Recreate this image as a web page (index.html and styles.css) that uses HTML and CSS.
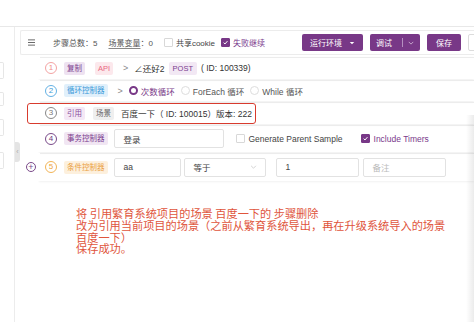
FILE: index.html
```html
<!DOCTYPE html>
<html lang="zh">
<head>
<meta charset="utf-8">
<link rel="stylesheet" href="styles.css">
</head>
<body>
<div class="topline"></div>
<div class="main">
  <aside class="sidebar">
    <div class="ghost g1"></div>
    <div class="ghost g2"></div>
    <div class="ghost g3"></div>
    <div class="ghost g4"></div>
  </aside>
  <div class="handle">‹</div>
  <section class="content">
    <div class="toolbar">
      <svg class="burger" viewBox="0 0 8 7"><path d="M0 .5h8M0 3.5h8M0 6.5h8" stroke="#555" stroke-width="1"/></svg>
      <span class="stat">步骤总数：5</span>
      <span class="stat"><u>场景变量</u>：0</span>
      <span class="check"><span class="box"></span>共享cookie</span>
      <span class="check on"><span class="box"><svg viewBox="0 0 10 10"><path d="M2.3 5.2 4.3 7.1 7.8 3" fill="none" stroke="#fff" stroke-width="1.4"/></svg></span>失败继续</span>
      <span class="btns">
        <span class="btn env">运行环境<svg class="caret" viewBox="0 0 8 5"><path d="M1 1h6L4 4z" fill="#fff"/></svg></span>
        <span class="btn debug">调试<span class="sep"></span><svg class="chev" viewBox="0 0 8 5"><path d="M1 1 4 4 7 1" fill="none" stroke="#e8d6ec" stroke-width="0.9"/></svg></span>
        <span class="btn save">保存</span>
        <span class="btn ghostbtn"></span>
      </span>
    </div>

    <div class="steps">
      <div class="row r1">
        <span class="gutter"></span>
        <span class="num n1">1</span>
        <span class="tag t-copy">复制</span>
        <span class="tag t-api">API</span>
        <span class="arrow">&gt;</span>
        <span class="txt">∠还好2</span>
        <span class="tag t-post">POST</span>
        <span class="txt">( ID: 100339)</span>
      </div>
      <div class="row r2">
        <span class="gutter"></span>
        <span class="num n2">2</span>
        <span class="tag t-loop">循环控制器</span>
        <span class="arrow">&gt;</span>
        <span class="radio on"></span><span class="rlabel on">次数循环</span>
        <span class="radio"></span><span class="rlabel">ForEach 循环</span>
        <span class="radio"></span><span class="rlabel">While 循环</span>
      </div>
      <div class="row r3">
        <span class="gutter"></span>
        <span class="num n3">3</span>
        <span class="tag t-ref">引用</span>
        <span class="tag t-scene">场景</span>
        <span class="txt">百度一下（ ID: 100015）版本: 222</span>
        <span class="mark"></span>
      </div>
      <div class="row r4">
        <span class="gutter"></span>
        <span class="num n4">4</span>
        <span class="tag t-tx">事务控制器</span>
        <span class="input w-login">登录</span>
        <span class="check"><span class="box"></span>Generate Parent Sample</span>
        <span class="check on timers"><span class="box"><svg viewBox="0 0 10 10"><path d="M2.3 5.2 4.3 7.1 7.8 3" fill="none" stroke="#fff" stroke-width="1.4"/></svg></span>Include Timers</span>
      </div>
      <div class="row r5">
        <span class="gutter"><span class="plus">+</span></span>
        <span class="num n5">5</span>
        <span class="tag t-if">条件控制器</span>
        <span class="input w-aa">aa</span>
        <span class="input w-sel">等于<svg class="selchev" viewBox="0 0 8 5"><path d="M1 1 4 4 7 1" fill="none" stroke="#bbb" stroke-width="0.8"/></svg></span>
        <span class="input w-one">1</span>
        <span class="input w-note ph">备注</span>
      </div>
    </div>

    <div class="note">
      <p>将 引用繁育系统项目的场景 百度一下的 步骤删除</p>
      <p>改为引用当前项目的场景（之前从繁育系统导出，再在升级系统导入的场景<br>百度一下）</p>
      <p>保存成功。</p>
    </div>
  </section>
  <div class="drawer-shadow"></div>
</div>
</body>
</html>
```

FILE: styles.css
```css
* { box-sizing: border-box; }
html, body { margin: 0; padding: 0; }
body {
  width: 474px;
  height: 322px;
  overflow: hidden;
  background: #fff;
  font-family: "Liberation Sans", "Noto Sans CJK SC", sans-serif;
  font-size: 8.5px;
  color: #333;
}
.topline { height: 27px; border-bottom: 1px solid #e8e8e8; }
.main { position: relative; display: flex; height: 295px; }
.sidebar {
  width: 15px;
  border-right: 1px solid #ececec;
  display: flex;
  flex-direction: column;
  flex: none;
}
.ghost {
  width: 4px;
  height: 17px;
  border: 1px solid #e6e6e6;
  border-left: none;
  border-radius: 0 2px 2px 0;
}
.g1 { margin-top: 35px; }
.g2 { margin-top: 13px; height: 14px; }
.g3 { margin-top: 13px; }
.g4 { margin-top: 16px; }
.handle {
  position: absolute;
  left: 15px;
  top: 115px;
  width: 5px;
  height: 20px;
  background: #e4e4e4;
  border-radius: 0 3px 3px 0;
  color: #aaa;
  font-size: 7px;
  line-height: 20px;
  text-align: center;
}
.content { flex: 1; padding-left: 5px; min-width: 0; }

.toolbar {
  margin-top: 3px;
  height: 25px;
  border: 1px solid #ececec;
  border-right: none;
  border-radius: 2px 0 0 2px;
  display: flex;
  align-items: center;
  padding-left: 7px;
  white-space: nowrap;
  color: #555;
  font-size: 8px;
}
.burger { width: 7px; height: 7px; margin-right: 18px; flex: none; }
.stat { margin-right: 11px; }
.stat u { text-decoration-color: #888; text-underline-offset: 2px; }
.check { display: inline-flex; align-items: center; margin-right: 6px; color: #444; }
.check .box {
  width: 9px; height: 9px;
  border: 1px solid #d8d8d8;
  border-radius: 1px;
  margin-right: 3px;
  display: inline-flex;
  background: #fff;
  flex: none;
}
.check.on { color: #7a3a8c; }
.check.on .box { background: #783887; border-color: #783887; }
.check .box svg { width: 100%; height: 100%; }
.btns { display: flex; align-items: center; margin-left: auto; gap: 7px; margin-right: -14px; }
.btn {
  height: 17px;
  background: #783887;
  color: #fff;
  border-radius: 2px;
  display: inline-flex;
  align-items: center;
  justify-content: center;
  font-size: 8px;
  flex: none;
}
.env { width: 61px; }
.caret { width: 6px; height: 4px; margin-left: 7px; }
.debug { width: 50px; }
.sep { width: 1px; height: 9px; background: #b58fc0; margin: 0 5px 0 10px; }
.chev { width: 6px; height: 4px; }
.save { width: 34px; }
.ghostbtn { width: 20px; background: #fff; border: 1px solid #dcdcdc; }

.steps {
  margin-top: 2px;
  display: flex;
  flex-direction: column;
  gap: 1px;
}
.row {
  position: relative;
  display: flex;
  align-items: center;
  white-space: nowrap;
  color: #444;
}
.row > .gutter {
  width: 20px;
  flex: none;
  align-self: stretch;
  display: flex;
  align-items: center;
  background: #fff;
}
.row::before {
  content: "";
  position: absolute;
  left: 19px; right: 0; top: 0; bottom: 0;
  border-top: 1px solid #ececec;
  box-shadow: 0 1px 2px rgba(0,0,0,0.06);
  z-index: -1;
}
.r1 { height: 22px; }
.r2 { height: 21px; }
.r3 { height: 22px; }
.r4 { height: 27px; }
.r5 { height: 28px; }
.num {
  width: 12px; height: 12px;
  border-radius: 50%;
  border: 1px solid;
  font-size: 8px;
  line-height: 10px;
  text-align: center;
  margin-left: 5px;
  margin-right: 7px;
  flex: none;
}
.n1 { color: #f08c8c; border-color: #f3a3a3; }
.n2 { color: #3c9ad8; border-color: #64b1e4; }
.n3 { color: #777; border-color: #888; }
.n4 { color: #6b3a7c; border-color: #7a4a8a; }
.n5 { color: #eea43a; border-color: #f2b457; }
.tag {
  height: 13px;
  line-height: 13px;
  padding: 0 3px;
  font-size: 7.5px;
  border-radius: 2px;
  margin-right: 10px;
  flex: none;
}
.t-copy { background: #eee2f1; color: #7b3d8f; }
.t-api { background: #fce8ec; color: #e9677f; }
.t-post { background: #f2e8f4; color: #7b3d8f; margin-left: 4px; margin-right: 4px; padding: 0 4px; }
.t-loop { background: #e1f0fb; color: #3a99d9; }
.t-ref { background: #f4e8f6; color: #8b4c9c; margin-right: 8px; }
.t-scene { background: #efefef; color: #666; margin-right: 7px; }
.t-tx { background: #f1e6f3; color: #7b3d8f; margin-right: 6px; }
.t-if { background: #fdf0dd; color: #eaa043; margin-right: 6px; }
.arrow { color: #888; margin-right: 6px; font-size: 9px; }
.txt { color: #333; }
.radio {
  width: 9px; height: 9px;
  border-radius: 50%;
  border: 1px solid #ddd;
  margin-right: 3px;
  flex: none;
}
.radio.on { border: 2.5px solid #783887; background: #fff; }
.rlabel { margin-right: 6px; color: #555; }
.rlabel.on { color: #783887; }
.mark {
  position: absolute;
  left: 7px;
  top: 1px;
  width: 229px;
  height: 21px;
  border: 1.5px solid #d83b2e;
  border-radius: 3px;
}
.input {
  height: 19px;
  border: 1px solid #e2e2e2;
  border-radius: 2px;
  display: inline-flex;
  align-items: center;
  padding-left: 9px;
  color: #444;
  flex: none;
  background: #fff;
}
.w-login { width: 110px; margin-right: 12px; }
.w-aa { width: 67px; margin-right: 3px; }
.w-sel { width: 82px; margin-right: 10px; justify-content: space-between; padding-right: 8px; }
.selchev { width: 7px; height: 4px; }
.w-one { width: 83px; margin-right: 4px; }
.w-note { width: 83px; }
.ph { color: #bbb; }
.r4 .check { margin-right: 18px; }
.r4 .check .box { margin-right: 4px; }
.timers { color: #7a3a8c; }
.plus {
  width: 10px; height: 10px;
  border-radius: 50%;
  border: 1px solid #7a4a8a;
  color: #7a4a8a;
  font-size: 9px;
  line-height: 8px;
  text-align: center;
  margin-left: 6px;
}

.note {
  margin-top: 27px;
  padding-left: 56px;
  color: #e0553c;
  font-family: "Noto Sans CJK SC", sans-serif;
  font-size: 11.2px;
  line-height: 11.8px;
}
.note p { margin: 0; }
.drawer-shadow {
  position: absolute;
  right: 0;
  top: 88px;
  bottom: 0;
  width: 8px;
  background: linear-gradient(to right, rgba(0,0,0,0), rgba(0,0,0,0.08));
}
```
